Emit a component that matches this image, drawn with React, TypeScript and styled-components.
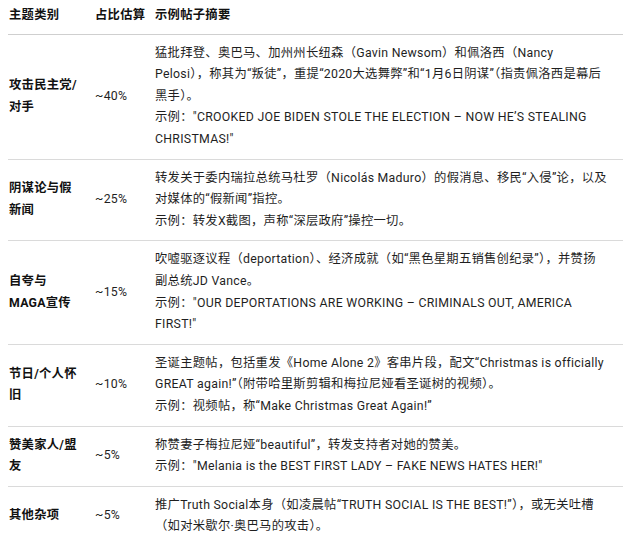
import React from "react";
import styled, { createGlobalStyle } from "styled-components";

const GlobalStyle = createGlobalStyle`
  html, body {
    margin: 0;
    padding: 0;
    background: #fff;
  }
  body {
    font-family: Roboto, "Noto Sans CJK SC", sans-serif;
    color: #1f1f1f;
    -webkit-font-smoothing: antialiased;
  }
`;

type Topic = {
  name: string[];
  share: string;
  lines: string[];
};

const topics: Topic[] = [
  {
    name: ["攻击民主党/", "对手"],
    share: "~40%",
    lines: [
      "猛批拜登、奥巴马、加州州长纽森（Gavin Newsom）和佩洛西（Nancy",
      "Pelosi），称其为“叛徒”，重提“2020大选舞弊”和“1月6日阴谋”（指责佩洛西是幕后",
      "黑手）。",
      '示例："CROOKED JOE BIDEN STOLE THE ELECTION – NOW HE\u2019S STEALING',
      'CHRISTMAS!"',
    ],
  },
  {
    name: ["阴谋论与假", "新闻"],
    share: "~25%",
    lines: [
      "转发关于委内瑞拉总统马杜罗（Nicolás Maduro）的假消息、移民“入侵”论，以及",
      "对媒体的“假新闻”指控。",
      "示例：转发X截图，声称“深层政府”操控一切。",
    ],
  },
  {
    name: ["自夸与", "MAGA宣传"],
    share: "~15%",
    lines: [
      "吹嘘驱逐议程（deportation）、经济成就（如“黑色星期五销售创纪录”），并赞扬",
      "副总统JD Vance。",
      '示例："OUR DEPORTATIONS ARE WORKING – CRIMINALS OUT, AMERICA',
      'FIRST!"',
    ],
  },
  {
    name: ["节日/个人怀", "旧"],
    share: "~10%",
    lines: [
      "圣诞主题帖，包括重发《Home Alone 2》客串片段，配文“Christmas is officially",
      "GREAT again!”（附带哈里斯剪辑和梅拉尼娅看圣诞树的视频）。",
      "示例：视频帖，称“Make Christmas Great Again!”",
    ],
  },
  {
    name: ["赞美家人/盟", "友"],
    share: "~5%",
    lines: [
      "称赞妻子梅拉尼娅“beautiful”，转发支持者对她的赞美。",
      '示例："Melania is the BEST FIRST LADY – FAKE NEWS HATES HER!"',
    ],
  },
  {
    name: ["其他杂项"],
    share: "~5%",
    lines: [
      "推广Truth Social本身（如凌晨帖“TRUTH SOCIAL IS THE BEST!”），或无关吐槽",
      "（如对米歇尔·奥巴马的攻击）。",
    ],
  },
];

const Table = styled.div`
  width: 615px;
  margin-left: 8px;
  font-size: 12.3px;
  line-height: 21.6px;
  letter-spacing: 0.28px;
`;

const Row = styled.div<{ $head?: boolean }>`
  display: grid;
  grid-template-columns: 87px 60px 1fr;
  align-items: center;
  padding: ${({ $head }) => ($head ? "5px 0 7px" : "8px 0")};
  border-bottom: 1px solid ${({ $head }) => ($head ? "#cfcfcf" : "#dadada")};

  &:last-child {
    border-bottom: none;
  }
`;

const HeadCell = styled.div<{ $first?: boolean }>`
  font-weight: 700;
  color: #111;
  padding-left: ${({ $first }) => ($first ? "1px" : "0")};
  white-space: nowrap;
`;

const TopicCell = styled.div`
  font-weight: 700;
  color: #111;
  padding-left: 1px;
  padding-right: 6px;
`;

const ShareCell = styled.div`
  padding-right: 8px;
`;

const SummaryCell = styled.div``;

const Line = styled.span`
  display: block;
  white-space: nowrap;
`;

export default function App() {
  return (
    <>
      <GlobalStyle />
      <Table>
        <Row $head>
          <HeadCell $first>主题类别</HeadCell>
          <HeadCell>占比估算</HeadCell>
          <HeadCell>示例帖子摘要</HeadCell>
        </Row>
        {topics.map((t) => (
          <Row key={t.share + t.name.join("")}>
            <TopicCell>
              {t.name.map((n) => (
                <Line key={n}>{n}</Line>
              ))}
            </TopicCell>
            <ShareCell>{t.share}</ShareCell>
            <SummaryCell>
              {t.lines.map((l) => (
                <Line key={l}>{l}</Line>
              ))}
            </SummaryCell>
          </Row>
        ))}
      </Table>
    </>
  );
}
